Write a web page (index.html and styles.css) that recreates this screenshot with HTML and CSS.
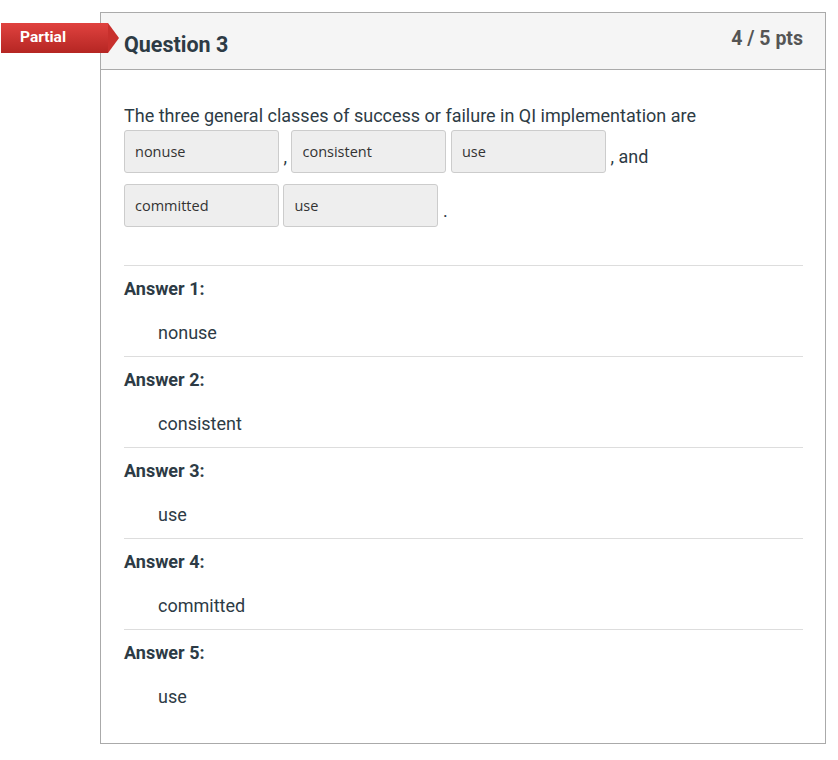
FILE: index.html
```html
<!DOCTYPE html>
<html lang="en">
<head>
  <meta charset="UTF-8" />
  <title>Question 3</title>
  <link rel="stylesheet" href="styles.css">
</head>
<body>
  <div class="pagina">
    <div class="questao">
      <div class="selo">Partial</div>

      <div class="cabecalho">
        <h2 class="titulo">Question 3</h2>
        <span class="pontos">4 / 5 pts</span>
      </div>

      <div class="corpo">
        <p class="enunciado">
          The three general classes of success or failure in QI implementation are
          <span class="lacuna">nonuse</span> , <span class="lacuna">consistent</span> <span class="lacuna">use</span> , and
          <span class="lacuna">committed</span> <span class="lacuna">use</span> .
        </p>

        <div class="respostas">
          <div class="resposta">
            <h3 class="rotulo">Answer 1:</h3>
            <p class="valor">nonuse</p>
          </div>
          <div class="resposta">
            <h3 class="rotulo">Answer 2:</h3>
            <p class="valor">consistent</p>
          </div>
          <div class="resposta">
            <h3 class="rotulo">Answer 3:</h3>
            <p class="valor">use</p>
          </div>
          <div class="resposta">
            <h3 class="rotulo">Answer 4:</h3>
            <p class="valor">committed</p>
          </div>
          <div class="resposta">
            <h3 class="rotulo">Answer 5:</h3>
            <p class="valor">use</p>
          </div>
        </div>
      </div>
    </div>
  </div>
</body>
</html>
```

FILE: styles.css
```css
* {
  margin: 0;
  padding: 0;
  box-sizing: border-box;
}

body {
  background: #fff;
  font-family: 'Roboto', 'Liberation Sans', sans-serif;
  color: #2d3b45;
}

.pagina {
  padding: 12px 12px 0 100px;
}

.questao {
  position: relative;
  border: 1px solid #aaa;
  width: 726px;
}

.selo {
  position: absolute;
  left: -100px;
  top: 10px;
  width: 107px;
  height: 30px;
  padding-left: 19px;
  line-height: 29px;
  font-size: 15.5px;
  font-weight: bold;
  color: #fff;
  background: linear-gradient(#e0423f, #b52623);
}

.selo::after {
  content: '';
  position: absolute;
  right: -11px;
  top: 0;
  border-top: 15px solid transparent;
  border-bottom: 15px solid transparent;
  border-left: 11px solid #c8302d;
}

.cabecalho {
  display: flex;
  justify-content: space-between;
  background: #f5f5f5;
  border-bottom: 1px solid #aaa;
  height: 57px;
  padding: 0 22px 0 23px;
}

.titulo {
  font-size: 21.5px;
  font-weight: bold;
  padding-top: 19px;
}

.pontos {
  font-size: 19.5px;
  font-weight: bold;
  color: #555;
  padding-top: 14px;
}

.corpo {
  padding: 34px 22px 23px 23px;
}

.enunciado {
  font-size: 18px;
  line-height: 24px;
  color: #2d3b45;
}

.lacuna {
  display: inline-block;
  overflow: hidden;
  vertical-align: -19px;
  width: 155px;
  height: 43px;
  margin: 2px 0 9px;
  padding: 12px 10px 0;
  background: #eee;
  border: 1px solid #ccc;
  border-radius: 3px;
  font-family: 'Open Sans', 'Liberation Sans', sans-serif;
  font-size: 14.5px;
  line-height: 18px;
  color: #333;
}

.respostas {
  margin-top: 29px;
}

.resposta {
  border-top: 1px solid #ddd;
  height: 91px;
  padding-top: 12px;
}

.rotulo {
  font-size: 18px;
  font-weight: bold;
  line-height: 22px;
}

.valor {
  font-size: 18px;
  line-height: 22px;
  margin: 22px 0 0 34px;
}
```
